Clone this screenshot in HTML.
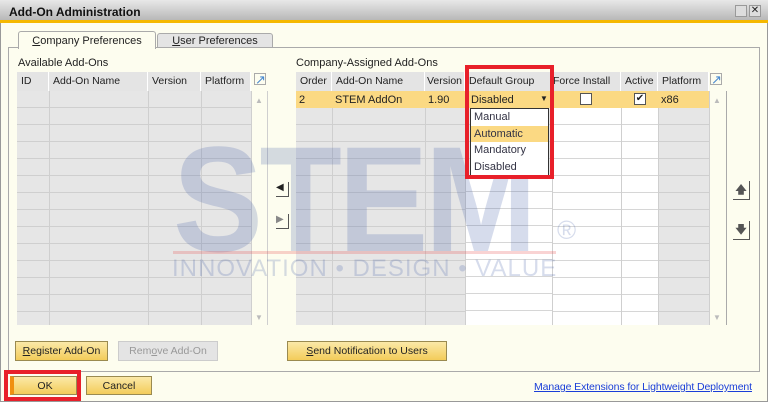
<!DOCTYPE html>
<html><head><style>
*{box-sizing:border-box;margin:0;padding:0}
body{width:768px;height:402px;overflow:hidden;background:#fdfdef;font-family:"Liberation Sans",sans-serif;font-size:11px;color:#222;position:relative}
.a{position:absolute}
.title{left:0;top:0;width:768px;height:23px;background:linear-gradient(#e8e8e8,#b8b8b8);border-bottom:3px solid #f5b800;font-weight:bold;font-size:12px;padding:5px 0 0 9px;color:#111}
.hdr{background:#e4e4e4;border-right:1px solid #fff;padding:3px 0 0 4px;height:19px;font-size:10.5px;color:#222;white-space:nowrap;overflow:hidden}
.grid{background-color:#e6e6e6;background-image:repeating-linear-gradient(to bottom,transparent 0,transparent 16px,#cfcfcf 16px,#cfcfcf 17px)}
.vl{width:1px;background:#cfcfcf}
.btn{background:linear-gradient(#fbe9a8,#f3cc5a);border:1px solid #9a8a50;text-align:center;font-size:10.5px;padding-top:3px;color:#222}
.sb{background:#fdfdef;border-left:1px solid #cfcfcf}
</style></head><body>
<div class="a" style="left:0;top:0;width:768px;height:402px;border:1px solid #999"></div>
<div class="a title">Add-On Administration</div>
<div class="a" style="left:735px;top:5px;width:12px;height:12px;background:#ddd;border:1px solid #999"></div>
<div class="a" style="left:749px;top:5px;width:12px;height:12px;background:#ddd;border:1px solid #999;font-size:10px;line-height:10px;text-align:center">✕</div>
<div class="a" style="left:8px;top:47px;width:752px;height:325px;border:1px solid #aaa"></div>
<div class="a" style="left:18px;top:31px;width:138px;height:18px;background:#fdfdef;border:1px solid #aaa;border-bottom:none;border-radius:3px 3px 0 0;text-align:center;padding-top:3px"><u>C</u>ompany Preferences</div>
<div class="a" style="left:157px;top:33px;width:116px;height:15px;background:#e4e4e4;border:1px solid #aaa;border-radius:3px 3px 0 0;text-align:center;padding-top:1px"><u>U</u>ser Preferences</div>
<div class="a" style="left:18px;top:57px">Available Add-Ons</div>
<div class="a" style="left:296px;top:57px">Company-Assigned Add-Ons</div>
<div class="a grid" style="left:17px;top:91px;width:234px;height:234px"></div>
<div class="a vl" style="left:49px;top:72px;height:253px"></div>
<div class="a vl" style="left:148px;top:72px;height:253px"></div>
<div class="a vl" style="left:201px;top:72px;height:253px"></div>
<div class="a hdr" style="left:17px;top:72px;width:32px">ID</div>
<div class="a hdr" style="left:49px;top:72px;width:99px">Add-On Name</div>
<div class="a hdr" style="left:148px;top:72px;width:53px">Version</div>
<div class="a hdr" style="left:201px;top:72px;width:50px">Platform</div>
<div class="a" style="left:254px;top:73px;color:#4a8ad0;font-size:13px;line-height:12px;border:1px solid #aaa;width:12px;height:12px;text-align:center">↗</div>
<div class="a sb" style="left:251px;top:91px;width:17px;height:234px;border-right:1px solid #cfcfcf"></div>
<div class="a" style="left:255px;top:96px;color:#bbb;font-size:8px">▲</div>
<div class="a" style="left:255px;top:313px;color:#bbb;font-size:8px">▼</div>
<div class="a" style="left:276px;top:182px;width:13px;height:15px;border-right:1px solid #555;border-bottom:1px solid #555;font-size:10px">◀</div>
<div class="a" style="left:276px;top:214px;width:13px;height:15px;border-right:1px solid #555;border-bottom:1px solid #555;font-size:10px;color:#888">▶</div>
<div class="a grid" style="left:296px;top:91px;width:413px;height:234px"></div>
<div class="a" style="left:552px;top:108px;width:106px;height:217px;background-color:#fff;background-image:repeating-linear-gradient(to bottom,transparent 0,transparent 16px,#d6d6d6 16px,#d6d6d6 17px)"></div>
<div class="a" style="left:466px;top:175px;width:86px;height:150px;background-color:#fff;background-image:repeating-linear-gradient(to bottom,transparent 0,transparent 16px,#d6d6d6 16px,#d6d6d6 17px)"></div>
<div class="a vl" style="left:332px;top:72px;height:253px"></div>
<div class="a vl" style="left:425px;top:72px;height:253px"></div>
<div class="a vl" style="left:465px;top:72px;height:253px"></div>
<div class="a vl" style="left:552px;top:72px;height:253px"></div>
<div class="a vl" style="left:621px;top:72px;height:253px"></div>
<div class="a vl" style="left:658px;top:72px;height:253px"></div>
<div class="a hdr" style="left:296px;top:72px;width:36px">Order</div>
<div class="a hdr" style="left:332px;top:72px;width:93px">Add-On Name</div>
<div class="a hdr" style="left:425px;top:72px;width:40px;padding-left:2px">Version</div>
<div class="a hdr" style="left:465px;top:72px;width:87px">Default Group</div>
<div class="a hdr" style="left:552px;top:72px;width:69px;padding-left:1px">Force Install</div>
<div class="a hdr" style="left:621px;top:72px;width:37px">Active</div>
<div class="a hdr" style="left:658px;top:72px;width:51px">Platform</div>
<div class="a" style="left:710px;top:73px;color:#4a8ad0;font-size:13px;line-height:12px;border:1px solid #aaa;width:12px;height:12px;text-align:center">↗</div>
<div class="a" style="left:296px;top:91px;width:413px;height:17px;background:#fbd983"></div>
<div class="a" style="left:299px;top:94px">2</div>
<div class="a" style="left:335px;top:94px">STEM AddOn</div>
<div class="a" style="left:428px;top:94px">1.90</div>
<div class="a" style="left:471px;top:94px">Disabled</div>
<div class="a" style="left:540px;top:94px;font-size:8px">▼</div>
<div class="a" style="left:580px;top:93px;width:12px;height:12px;background:#fff;border:1px solid #555"></div>
<div class="a" style="left:634px;top:93px;width:12px;height:12px;background:#fff;border:1px solid #555;font-size:10px;line-height:10px;text-align:center">✔</div>
<div class="a" style="left:661px;top:94px">x86</div>
<div class="a sb" style="left:709px;top:91px;width:18px;height:234px;border-right:1px solid #aaa"></div>
<div class="a" style="left:713px;top:96px;color:#bbb;font-size:8px">▲</div>
<div class="a" style="left:713px;top:313px;color:#bbb;font-size:8px">▼</div>
<div class="a" style="left:733px;top:181px;width:17px;height:19px;border-right:1px solid #555;border-bottom:1px solid #555;text-align:center;font-size:11px;font-weight:bold;color:#555">🡅</div>
<div class="a" style="left:733px;top:221px;width:17px;height:19px;border-right:1px solid #555;border-bottom:1px solid #555;text-align:center;font-size:11px;font-weight:bold;color:#555">🡇</div>
<div class="a" style="left:173px;top:124px;font-size:150px;font-weight:bold;color:rgba(70,95,170,0.22);letter-spacing:-4px;line-height:150px;transform:scaleX(0.9);transform-origin:0 0">STEM</div>
<div class="a" style="left:557px;top:215px;font-size:26px;color:rgba(70,95,170,0.22)">®</div>
<div class="a" style="left:173px;top:251px;width:383px;height:3px;background:rgba(230,80,80,0.25)"></div>
<div class="a" style="left:172px;top:255px;font-size:24px;color:rgba(70,95,170,0.22);letter-spacing:1px">INNOVATION • DESIGN • VALUE</div>
<div class="a" style="left:470px;top:108px;width:79px;height:68px;background:#fff;border:1px solid #333"></div>
<div class="a" style="left:471px;top:126px;width:77px;height:16px;background:#fbd983"></div>
<div class="a" style="left:474px;top:111px;color:#334">Manual</div>
<div class="a" style="left:474px;top:128px;color:#334">Automatic</div>
<div class="a" style="left:474px;top:144px;color:#334">Mandatory</div>
<div class="a" style="left:474px;top:161px;color:#334">Disabled</div>
<div class="a" style="left:465px;top:65px;width:89px;height:114px;border:4px solid #e8202a"></div>
<div class="a btn" style="left:15px;top:341px;width:93px;height:20px"><u>R</u>egister Add-On</div>
<div class="a btn" style="left:118px;top:341px;width:100px;height:20px;background:#e4e4e4;border-color:#ccc;color:#999">Rem<u>o</u>ve Add-On</div>
<div class="a btn" style="left:287px;top:341px;width:160px;height:20px"><u>S</u>end Notification to Users</div>
<div class="a btn" style="left:10px;top:376px;width:67px;height:19px;border-left:4px solid #f09010">OK</div>
<div class="a" style="left:4px;top:370px;width:77px;height:31px;border:4px solid #e8202a"></div>
<div class="a btn" style="left:86px;top:376px;width:66px;height:19px">Cancel</div>
<div class="a" style="right:16px;top:381px;color:#1a3ed8;text-decoration:underline;font-size:10.5px;letter-spacing:-0.1px">Manage Extensions for Lightweight Deployment</div>
</body></html>
